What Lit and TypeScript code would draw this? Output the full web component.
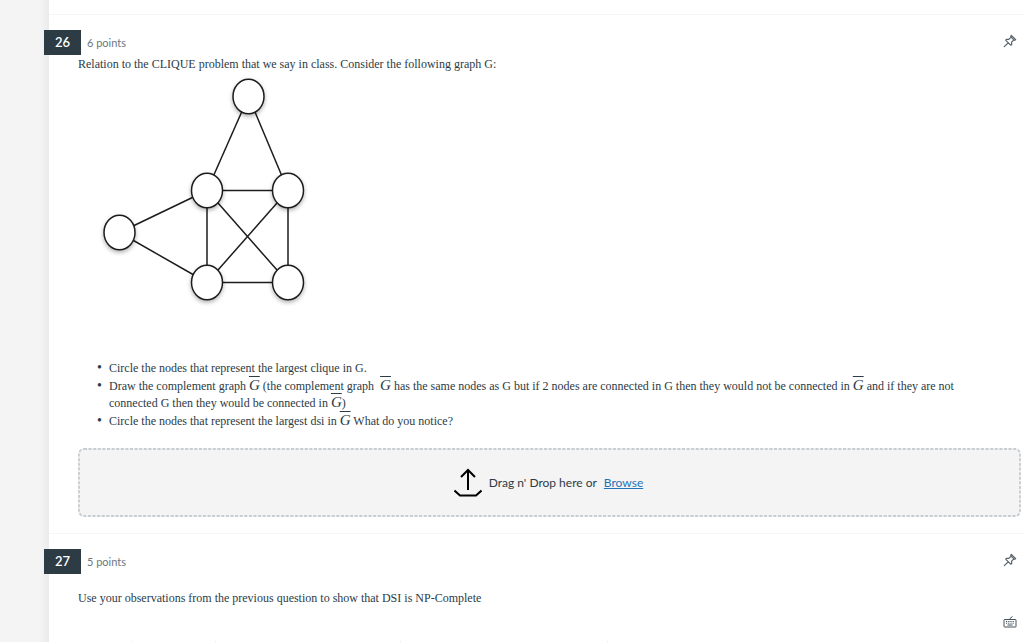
import { LitElement, html, css, svg } from "lit";
import { customElement, property } from "lit/decorators.js";

const nodes: Record<string, [number, number]> = {
  top: [170.5, 22.5],
  upperLeft: [129, 116.5],
  upperRight: [210, 116.5],
  left: [41.5, 158.5],
  lowerLeft: [129, 208.5],
  lowerRight: [210, 208.5],
};

const edges: [string, string][] = [
  ["top", "upperLeft"],
  ["top", "upperRight"],
  ["upperLeft", "upperRight"],
  ["upperLeft", "left"],
  ["upperLeft", "lowerLeft"],
  ["upperLeft", "lowerRight"],
  ["upperRight", "lowerLeft"],
  ["upperRight", "lowerRight"],
  ["left", "lowerLeft"],
  ["lowerLeft", "lowerRight"],
];

@customElement("clique-graph")
export class CliqueGraph extends LitElement {
  static styles = css`
    :host { display: block; }
    svg { display: block; }
    .edge { stroke: #1c1c1c; stroke-width: 1.5; }
    .node { fill: #fff; stroke: #1c1c1c; stroke-width: 1.5; filter: drop-shadow(0 2px 2px rgba(0, 0, 0, 0.3)); }
  `;

  render() {
    return html`<svg width="260" height="240" viewBox="0 0 260 240" role="img" aria-label="Graph G">
      ${edges.map(([a, b]) => svg`<line class="edge" x1=${nodes[a][0]} y1=${nodes[a][1]} x2=${nodes[b][0]} y2=${nodes[b][1]} />`)}
      ${Object.values(nodes).map(([x, y]) => svg`<ellipse class="node" cx=${x} cy=${y} rx="15.5" ry="17.3" />`)}
    </svg>`;
  }
}

@customElement("question-header")
export class QuestionHeader extends LitElement {
  static styles = css`
    :host { display: flex; align-items: center; gap: 6px; margin-left: -5px; padding-right: 7px; font-family: Lato, sans-serif; }
    .number { width: 37px; height: 25px; line-height: 25px; background: #2d3b45; color: #fff; font-size: 13px; font-weight: 600; text-align: center; margin: 0; }
    .points { font-size: 11px; line-height: 16px; color: #6b7780; flex: 1; }
    .pin { border: 0; background: none; padding: 0; width: 14px; height: 14px; margin-top: -4px; }
    svg { display: block; }
  `;

  @property({ type: Number }) number = 0;
  @property({ type: Number }) points = 0;

  render() {
    return html`
      <h2 class="number">${this.number}</h2>
      <span class="points">${this.points} points</span>
      <button class="pin" aria-label="Pin question ${this.number}">
        <svg width="14" height="14" viewBox="0 0 14 14" fill="none" stroke="#56616a" stroke-width="1.2" stroke-linejoin="round" stroke-linecap="round">
          <path d="M8.3 1.300 12.700 5.700 11.500 6.300 10.900 5.900 8.600 8.200 8.700 10.700 7.700 11.200 2.800 6.300 3.300 5.300 5.800 5.400 8.100 3.100 7.700 2.500ZM8.100 3.100 10.900 5.900M5.200 8.800 1.300 12.700"/>
        </svg>
      </button>`;
  }
}

@customElement("app-root")
export class AppRoot extends LitElement {
  static styles = css`
    :host { display: grid; grid-template-columns: 49px minmax(0, 1fr); height: 100vh; overflow: hidden; background: #fff; color: #2d3b45; font-family: "Liberation Serif", serif; font-size: 12px; line-height: 16px; }
    .rail { background: linear-gradient(to right, #f4f4f4 40px, #ebebeb); }
    .page { padding-top: 14px; min-width: 0; }
    .question { border-top: 1px solid #f5f5f5; padding-top: 15px; }
    .body { padding: 1px 3px 16px 29px; }
    .body.second { padding: 16px 7px 0 29px; }
    p { margin: 0; }
    clique-graph { margin: 2px 0 45px; }
    .tasks { margin: 0; padding: 0 20px 0 31px; line-height: 17px; }
    .tasks li::marker { content: "•\\00a0\\00a0"; font-size: 14px; }
    .bar { font-size: 15px; line-height: 14px; font-style: italic; text-decoration: overline 1px; }
    .drop { position: relative; display: flex; align-items: center; justify-content: center; gap: 7px; box-sizing: border-box; height: 69px; margin-top: 18px; padding-right: 2px; border-radius: 6px; background: #f4f4f4; font-family: Lato, sans-serif; font-size: 12px; }
    .outline { position: absolute; inset: 0; padding: 1px; box-sizing: border-box; width: 100%; height: 100%; overflow: visible; }
    .outline rect { fill: none; stroke: #c7cdd1; stroke-width: 1.8; stroke-dasharray: 3 1.6; }
    .drop a { color: #2573b8; text-decoration: underline; }
    .keys { display: flex; justify-content: flex-end; padding-top: 10px; }
    .keys button { border: 0; padding: 0; background: none; }
    svg { display: block; }
    .toolbar { display: flex; margin-top: 13px; height: 24px; }
    .group { box-sizing: border-box; border-right: 1px solid #e4e6e8; }
  `;

  render() {
    const g = html`<i class="bar">G</i>`;
    return html`
      <aside class="rail"></aside>
      <main class="page">
        <section class="question">
          <question-header number="26" points="6"></question-header>
          <div class="body">
            <p>Relation to the CLIQUE problem that we say in class. Consider the following graph G:</p>
            <clique-graph></clique-graph>
            <ul class="tasks">
              <li>Circle the nodes that represent the largest clique in G.</li>
              <li>Draw the complement graph ${g} (the complement graph &nbsp;${g} has the same nodes as G but if 2 nodes are connected in G then they would not be connected in ${g} and if they are not connected G then they would be connected in ${g})</li>
              <li>Circle the nodes that represent the largest dsi in ${g} What do you notice?</li>
            </ul>
            <div class="drop">
              <svg class="outline" aria-hidden="true"><rect width="100%" height="100%" rx="5"/></svg>
              <svg width="28" height="30" viewBox="0 0 28 30" fill="none" stroke="#000" stroke-width="2">
                <path d="M14 22V2M7 9l7-7 7 7M.5 22.5l5.5 5h16l5.500-5"/>
              </svg>
              <span>Drag n' Drop here or</span>
              <a href="#">Browse</a>
            </div>
          </div>
        </section>
        <section class="question">
          <question-header number="27" points="5"></question-header>
          <div class="body second">
            <p>Use your observations from the previous question to show that DSI is NP-Complete</p>
            <div class="keys">
              <button aria-label="Keyboard shortcuts">
                <svg width="14" height="12" viewBox="0 0 14 12" fill="none" stroke="#46525b">
                  <rect x="1" y="3.500" width="12" height="7.500" rx=".5"/>
                  <path d="M7 3.500V2.500L9.500 .5"/>
                  <path d="M3 5.500h8M3 7.200h8" stroke-dasharray="1.200 1"/>
                  <path d="M4.500 9h5"/>
                </svg>
              </button>
            </div>
            <div class="toolbar">
              ${[55, 83, 185, 207].map((w) => html`<span class="group" style="width:${w}px"></span>`)}
            </div>
          </div>
        </section>
      </main>`;
  }
}
